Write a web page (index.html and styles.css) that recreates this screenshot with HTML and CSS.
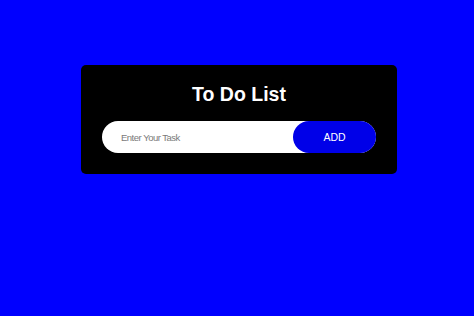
FILE: index.html
```html
<!DOCTYPE html>
<html>
<head>
<meta charset="utf-8">
<link rel="stylesheet" href="styles.css">
</head>
<body>
<div class="card">
  <h1 class="title">To Do List</h1>
  <div class="row">
    <input class="task" type="text" placeholder="Enter Your Task">
    <button class="add">ADD</button>
  </div>
</div>
</body>
</html>
```
FILE: styles.css
```css
html, body {
  margin: 0;
  padding: 0;
}
body {
  background: #0000ff;
  width: 474px;
  height: 316px;
  font-family: "Liberation Sans", Arial, sans-serif;
  overflow: hidden;
}
.card {
  margin: 65px 0 0 81px;
  width: 316px;
  box-sizing: border-box;
  padding: 18px 21px 21px;
  background: #000;
  border-radius: 5px;
}
.title {
  margin: 0 0 16px;
  font-size: 19.5px;
  line-height: 22px;
  font-weight: bold;
  color: #fff;
  text-align: center;
}
.row {
  display: flex;
  height: 32px;
  background: #fff;
  border-radius: 16px;
}
.task {
  flex: 1;
  min-width: 0;
  border: none;
  outline: none;
  background: transparent;
  padding: 0 0 0 19px;
  font-family: "Liberation Sans", Arial, sans-serif;
  font-size: 9.5px;
  letter-spacing: -0.5px;
  color: #333;
}
.task::placeholder {
  color: #7a7a7a;
}
.add {
  width: 83px;
  height: 32px;
  border: none;
  border-radius: 16px;
  background: #0000e8;
  color: #fff;
  font-family: "Liberation Sans", Arial, sans-serif;
  font-size: 10.5px;
  padding: 0;
}
```
